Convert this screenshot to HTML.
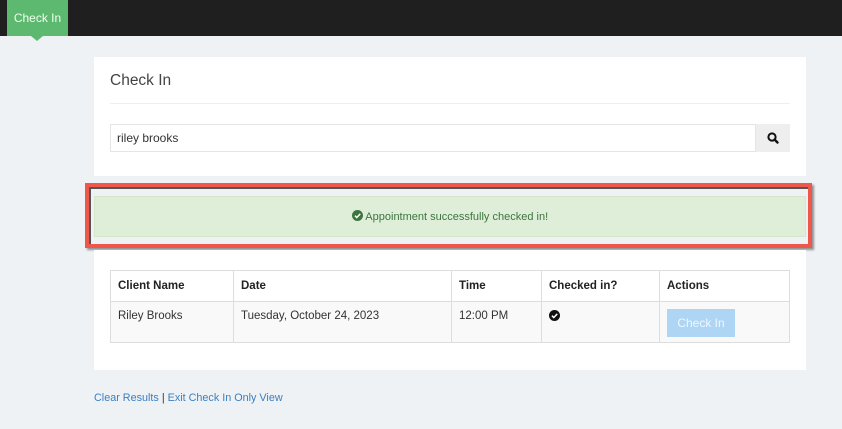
<!DOCTYPE html>
<html><head><style>
*{box-sizing:border-box;margin:0;padding:0}
body{width:842px;height:429px;background:#eef2f5;font-family:"Liberation Sans",sans-serif;position:relative;overflow:hidden;color:#333}
.top{position:absolute;left:0;top:0;width:842px;height:36px;background:#1f1f1f}
.tab{position:absolute;left:7px;top:0;width:61px;height:36px;background:#5cb96f;color:#f0fff0;font-size:12px;line-height:36px;text-align:center}
.tab:after{content:"";position:absolute;left:24px;top:36px;border:6px solid transparent;border-top:5px solid #5cb96f;border-bottom:0}
.p{position:absolute;background:#fff}
.abs{position:absolute}
table{border-collapse:collapse;position:absolute;left:110px;top:270px;width:680px;font-size:11.5px}
td,th{border:1px solid #ddd;text-align:left;padding:0 7px;vertical-align:top}
th{height:30px;line-height:30px;font-weight:bold;color:#222}
td{height:41px;padding-top:8px;background:#f9f9f9}
</style></head><body>
<div class="top"></div><div class="tab">Check In</div>
<div class="p" style="left:94px;top:57px;width:712px;height:119px"></div>
<div class="abs" style="left:110px;top:72px;font-size:15.5px;color:#444">Check In</div>
<div class="abs" style="left:110px;top:103px;width:680px;height:1px;background:#eee"></div>
<div class="abs" style="left:110px;top:124px;width:646px;height:28px;border:1px solid #e5e5e5;font-size:12px;line-height:26px;padding-left:6px;color:#333">riley brooks</div>
<div class="abs" style="left:756px;top:124px;width:34px;height:28px;background:#eee">
<svg width="34" height="28" viewBox="0 0 34 28"><circle cx="16" cy="13" r="3.6" fill="none" stroke="#111" stroke-width="2"/><line x1="18.6" y1="15.6" x2="21.5" y2="18.5" stroke="#111" stroke-width="2.4" stroke-linecap="round"/></svg></div>
<div class="abs" style="left:85px;top:183px;width:727px;height:65px;border:4px solid #f0574b;box-shadow:inset 2px 2px 0 #555,2px 2px 2px rgba(0,0,0,.4)"></div>
<div class="abs" style="left:94px;top:196px;width:712px;height:41px;background:#dfeed8;border:1px solid #d4e7c9;color:#3c763d;font-size:11px;line-height:40px;text-align:center">
<svg width="11" height="11" viewBox="0 0 12 12" style="vertical-align:-1px"><circle cx="6" cy="6" r="6" fill="#3c763d"/><path d="M3.2 6.2l2 2 3.8-4" stroke="#fff" stroke-width="1.6" fill="none"/></svg> Appointment successfully checked in!</div>
<div class="p" style="left:94px;top:250px;width:712px;height:120px"></div>
<table><tr><th style="width:123px">Client Name</th><th style="width:218px">Date</th><th style="width:90px">Time</th><th style="width:118px">Checked in?</th><th>Actions</th></tr>
<tr><td>Riley Brooks</td><td>Tuesday, October 24, 2023</td><td>12:00 PM</td><td><svg width="11" height="11" viewBox="0 0 12 12"><circle cx="6" cy="6" r="6" fill="#111"/><path d="M3.2 6.2l2 2 3.8-4" stroke="#fff" stroke-width="1.6" fill="none"/></svg></td><td><div style="width:68px;height:28px;background:#afd5f5;color:#eef7ff;font-size:12px;line-height:28px;text-align:center;margin-top:-1px">Check In</div></td></tr></table>
<div class="abs" style="left:94px;top:392px;font-size:10.8px;color:#3a7fc1">Clear Results <span style="color:#333">|</span> Exit Check In Only View</div>
</body></html>
